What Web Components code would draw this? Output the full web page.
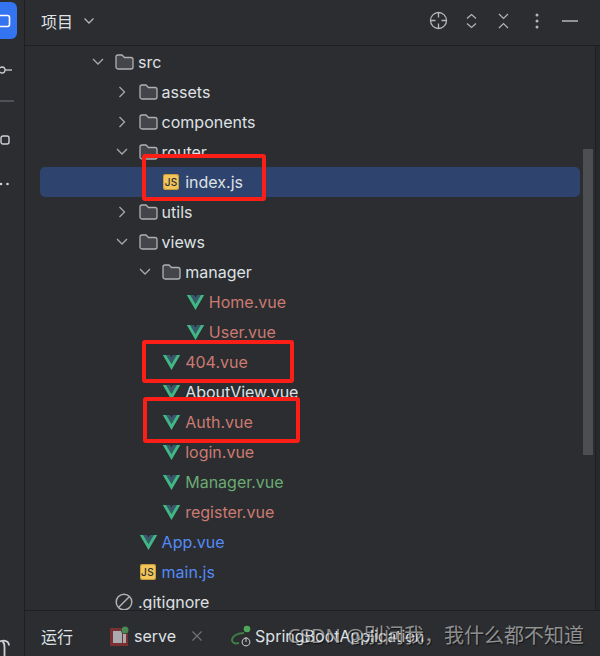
<!DOCTYPE html>
<html lang="zh">
<head>
<meta charset="utf-8">
<title>项目</title>
<style>
  html, body { margin: 0; padding: 0; background: #2b2d30; }
  body { width: 600px; height: 656px; overflow: hidden; font-family: Inter, "Noto Sans CJK SC", sans-serif; }
</style>
</head>
<body>
<ide-window>
  <side-rail slot="rail"></side-rail>
  <tool-header slot="header"></tool-header>
  <file-tree slot="tree">
    <tree-row depth="0" kind="folder" open>src</tree-row>
    <tree-row depth="1" kind="folder">assets</tree-row>
    <tree-row depth="1" kind="folder">components</tree-row>
    <tree-row depth="1" kind="folder" open>router</tree-row>
    <tree-row depth="2" kind="js" selected>index.js</tree-row>
    <tree-row depth="1" kind="folder">utils</tree-row>
    <tree-row depth="1" kind="folder" open>views</tree-row>
    <tree-row depth="2" kind="folder" open>manager</tree-row>
    <tree-row depth="3" kind="vue" tone="red">Home.vue</tree-row>
    <tree-row depth="3" kind="vue" tone="red">User.vue</tree-row>
    <tree-row depth="2" kind="vue" tone="red">404.vue</tree-row>
    <tree-row depth="2" kind="vue">AboutView.vue</tree-row>
    <tree-row depth="2" kind="vue" tone="red">Auth.vue</tree-row>
    <tree-row depth="2" kind="vue" tone="red">login.vue</tree-row>
    <tree-row depth="2" kind="vue" tone="green">Manager.vue</tree-row>
    <tree-row depth="2" kind="vue" tone="red">register.vue</tree-row>
    <tree-row depth="1" kind="vue" tone="blue">App.vue</tree-row>
    <tree-row depth="1" kind="js" tone="blue">main.js</tree-row>
    <tree-row depth="0" kind="ignore">.gitignore</tree-row>
  </file-tree>
  <run-bar slot="footer"></run-bar>
  <mark-box slot="overlay" style="left:142px;top:154px;width:124px;height:47px"></mark-box>
  <mark-box slot="overlay" style="left:142px;top:340px;width:152px;height:43px"></mark-box>
  <mark-box slot="overlay" style="left:143px;top:397px;width:157px;height:46px"></mark-box>
  <water-mark slot="overlay">CSDN @别问我，我什么都不知道</water-mark>
</ide-window>

<script>
const windowTemplate = document.createElement('template');
windowTemplate.innerHTML = `
<style>
  :host { display: grid; grid-template-columns: 25px 1fr; width: 600px; height: 656px; position: relative; overflow: hidden; background: #2b2d30; color: #dfe1e5; }
  main { display: flex; flex-direction: column; min-width: 0; height: 656px; }
</style>
<slot name="rail"></slot>
<main>
  <slot name="header"></slot>
  <slot name="tree"></slot>
  <slot name="footer"></slot>
</main>
<slot name="overlay"></slot>
`;

class IdeWindow extends HTMLElement {
  constructor() {
    super();
    this.attachShadow({ mode: 'open' });
    this.shadowRoot.appendChild(windowTemplate.content.cloneNode(true));
  }
}

const railTemplate = document.createElement('template');
railTemplate.innerHTML = `
<style>
  :host { display: flex; flex-direction: column; align-items: flex-start; border-right: 1px solid #1e1f22; height: 656px; overflow: hidden; position: relative; }
  .active { width: 17px; height: 37px; margin-top: 2px; background: #3574f0; border-radius: 0 6px 6px 0; display: flex; align-items: center; }
  .sep { width: 14px; height: 2px; background: #4e5157; margin-top: 25px; }
  svg { display: block; flex: none; }
  .commit { margin-top: 26px; }
  .square { margin-top: 33px; }
  .dots { margin-top: 37px; }
  .bottom { position: absolute; left: 0; top: 638px; }
</style>
<div class="active">
  <svg width="11" height="14" viewBox="0 0 11 14" fill="none"><path d="M0 1.500h7.500a2 2 0 0 1 2 2v7a2 2 0 0 1-2 2H0" stroke="#fff" stroke-width="1.600"/></svg>
</div>
<svg class="commit" width="13" height="10" viewBox="0 0 13 10" fill="none" stroke="#ced0d6" stroke-width="1.300"><circle cx="2" cy="5" r="3"/><path d="M5 5h7"/></svg>
<div class="sep"></div>
<svg class="square" width="10" height="10" viewBox="0 0 10 10" fill="none" stroke="#ced0d6" stroke-width="1.400"><rect x="1" y="1" width="8" height="8" rx="2"/></svg>
<svg class="dots" width="10" height="4" viewBox="0 0 10 4" fill="#ced0d6"><circle cx="1" cy="2" r="1.300"/><circle cx="7.500" cy="2" r="1.300"/></svg>
<svg class="bottom" width="11" height="18" viewBox="0 0 11 18" fill="none" stroke="#ced0d6" stroke-width="1.800"><path d="M0 3.500c5-2 9 0 9 4"/><path d="M2.500 3.500c1.500 1 2 3 2 5.500v9"/></svg>
`;

class SideRail extends HTMLElement {
  constructor() {
    super();
    this.attachShadow({ mode: 'open' });
    this.shadowRoot.appendChild(railTemplate.content.cloneNode(true));
  }
}

const headerTemplate = document.createElement('template');
headerTemplate.innerHTML = `
<style>
  :host { display: flex; align-items: center; height: 46px; box-sizing: border-box; flex: none; border-bottom: 1px solid #1e1f22; padding: 0 0 4px 16px; }
  .title { font: 16px "Noto Sans CJK SC", Inter, sans-serif; color: #dfe1e5; }
  .caret { margin-left: 10px; }
  .tools { margin-left: auto; display: flex; align-items: center; margin-right: 22px; }
  svg { display: block; }
  .tools svg { stroke: #b4b6ba; fill: none; }
</style>
<span class="title">项目</span>
<svg class="caret" width="12" height="8" viewBox="0 0 12 8" fill="none" stroke="#b4b6ba" stroke-width="1.300"><path d="M1.500 1.500 6 6l4.500-4.500"/></svg>
<div class="tools">
  <svg width="19" height="19" viewBox="0 0 19 19" stroke-width="1.300"><circle cx="9.500" cy="9.500" r="8"/><path d="M9.500 1.500v5M9.500 12.500v5M1.500 9.500h5M12.500 9.500h5"/></svg>
  <svg style="margin-left:18px" width="11" height="16" viewBox="0 0 11 16" stroke-width="1.200"><path d="M1 5.500 5.500 1.500l4.500 4M1 10.500l4.500 4 4.500-4"/></svg>
  <svg style="margin-left:21px" width="11" height="16" viewBox="0 0 11 16" stroke-width="1.200"><path d="M1 1l4.500 4.500L10 1M1 15l4.500-4.500L10 15"/></svg>
  <svg style="margin-left:26px;fill:#b4b6ba;stroke:none" width="4" height="16" viewBox="0 0 4 16"><circle cx="2" cy="2" r="1.500"/><circle cx="2" cy="8" r="1.500"/><circle cx="2" cy="14" r="1.500"/></svg>
  <svg style="margin-left:23px" width="16" height="2" viewBox="0 0 16 2" stroke-width="1.500"><path d="M0 1h16"/></svg>
</div>
`;

class ToolHeader extends HTMLElement {
  constructor() {
    super();
    this.attachShadow({ mode: 'open' });
    this.shadowRoot.appendChild(headerTemplate.content.cloneNode(true));
  }
}

const treeTemplate = document.createElement('template');
treeTemplate.innerHTML = `
<style>
  :host { display: block; flex: 1; min-height: 0; overflow: hidden; position: relative; padding-top: 1px; }
  .scrollbar { position: absolute; left: 558px; top: 103px; width: 10px; height: 306px; background: #4d4e51; }
  .edge { position: absolute; left: 570px; top: 0; bottom: 0; width: 5px; background: #27292c; border-left: 1px solid #1e1f22; }
</style>
<slot></slot>
<div class="scrollbar"></div>
<div class="edge"></div>
`;

class FileTree extends HTMLElement {
  constructor() {
    super();
    this.attachShadow({ mode: 'open' });
    this.shadowRoot.appendChild(treeTemplate.content.cloneNode(true));
  }
}

const icons = {
  folder: `<svg width="19" height="16" viewBox="0 0 19 16"><path d="M1 3a2 2 0 0 1 2-2h4l2.500 2.500H16a2 2 0 0 1 2 2V13a2 2 0 0 1-2 2H3a2 2 0 0 1-2-2z" fill="#43454a" stroke="#afb1b3" stroke-width="1.300"/></svg>`,
  vue: `<svg width="19" height="15" viewBox="0 0 256 221"><path d="M0 0l128 221L256 0h-66L128 107 66 0H0z" fill="#41b883"/><path d="M48 0l80 138L208 0h-58L128 38 106 0H48z" fill="#38596b"/></svg>`,
  js: `<span class="js">JS</span>`,
  ignore: `<svg width="18" height="18" viewBox="0 0 18 18" fill="none" stroke="#afb1b3" stroke-width="1.500"><circle cx="9" cy="9" r="7.800"/><path d="M3.500 14.500l11-11"/></svg>`
};
const tones = { red: '#cc7a72', green: '#6aab73', blue: '#548af7' };

const rowTemplate = document.createElement('template');
rowTemplate.innerHTML = `
<style>
  :host { display: flex; align-items: center; height: 30px; position: relative; font: 16px Inter, "Noto Sans CJK SC", sans-serif; color: #dfe1e5; white-space: nowrap; }
  .sel { display: none; position: absolute; left: 15px; width: 540px; top: 0; bottom: 0; background: #2e436e; border-radius: 5px; }
  :host([selected]) .sel { display: block; }
  .line { position: relative; display: flex; align-items: center; }
  .chev { width: 20px; margin-right: 7px; display: flex; justify-content: center; }
  .icon { width: 23px; display: flex; align-items: center; }
  .js { width: 16px; height: 16px; margin-left: 1px; border-radius: 3px; background: #f2c55c; box-shadow: inset 0 0 0 1px #c99d3a; color: #2b2d30; font: 500 10px/17px Inter, sans-serif; letter-spacing: .4px; text-align: center; }
  svg { display: block; }
</style>
<div class="sel"></div>
<div class="line">
  <span class="chev"></span>
  <span class="icon"></span>
  <span class="label"><slot></slot></span>
</div>
`;

class TreeRow extends HTMLElement {
  constructor() {
    super();
    this.attachShadow({ mode: 'open' });
    this.shadowRoot.appendChild(rowTemplate.content.cloneNode(true));
  }
  connectedCallback() {
    const root = this.shadowRoot;
    const kind = this.getAttribute('kind');
    root.querySelector('.line').style.paddingLeft = (63 + 23.6 * Number(this.getAttribute('depth'))) + 'px';
    root.querySelector('.icon').innerHTML = icons[kind];
    if (kind === 'folder') {
      root.querySelector('.chev').innerHTML = this.hasAttribute('open')
        ? '<svg width="12" height="8" viewBox="0 0 12 8" fill="none" stroke="#a8aaae" stroke-width="1.300"><path d="M1 1l5 5 5-5"/></svg>'
        : '<svg width="8" height="12" viewBox="0 0 8 12" fill="none" stroke="#a8aaae" stroke-width="1.300"><path d="M1.500 1l5 5-5 5"/></svg>';
    }
    const tone = tones[this.getAttribute('tone')];
    if (tone) root.querySelector('.label').style.color = tone;
  }
}

const runTemplate = document.createElement('template');
runTemplate.innerHTML = `
<style>
  :host { display: flex; align-items: center; flex: none; height: 46px; box-sizing: border-box; border-top: 1px solid #1e1f22; padding: 5px 0 0 16px; font: 16px Inter, "Noto Sans CJK SC", sans-serif; color: #dfe1e5; white-space: nowrap; }
  .name { font-family: "Noto Sans CJK SC", sans-serif; }
  .tab { display: flex; align-items: center; }
  svg { display: block; }
</style>
<span class="name">运行</span>
<div class="tab" style="margin-left:37px">
  <svg width="20" height="22" viewBox="0 0 20 22"><rect x="0" y="3" width="18" height="18" fill="#7a2f33"/><rect x="3" y="6" width="9" height="12" fill="#a9abae"/><rect x="13" y="6" width="3" height="12" fill="#a9abae"/><circle cx="15" cy="5" r="4" fill="#2b2d30"/><circle cx="15" cy="5" r="3.500" fill="#4a8a52"/></svg>
  <span style="margin-left:4px">serve</span>
  <svg style="margin-left:16px" width="10" height="10" viewBox="0 0 10 10" fill="none" stroke="#6f7277" stroke-width="1.200"><path d="M.5.500l9 9M9.500.500l-9 9"/></svg>
</div>
<div class="tab" style="margin-left:29px">
  <svg width="20" height="22" viewBox="0 0 20 22" fill="none"><path d="M13 8C7 8 1 11 1 15c0 3 3 4 7 3" stroke="#3f7d46" stroke-width="2"/><circle cx="16" cy="4" r="3.300" fill="#4fa85a"/><circle cx="15" cy="17" r="3.800" stroke="#b4b6ba" stroke-width="1.200"/><path d="M15 12v5" stroke="#b4b6ba" stroke-width="1.200"/></svg>
  <span style="margin-left:4px">SpringBootApplication</span>
</div>
`;

class RunBar extends HTMLElement {
  constructor() {
    super();
    this.attachShadow({ mode: 'open' });
    this.shadowRoot.appendChild(runTemplate.content.cloneNode(true));
  }
}

const boxTemplate = document.createElement('template');
boxTemplate.innerHTML = `
<style>
  :host { display: block; position: absolute; box-sizing: border-box; border: 4px solid #fb1f17; border-radius: 3px; }
</style>
`;

class MarkBox extends HTMLElement {
  constructor() {
    super();
    this.attachShadow({ mode: 'open' });
    this.shadowRoot.appendChild(boxTemplate.content.cloneNode(true));
  }
}

const markTemplate = document.createElement('template');
markTemplate.innerHTML = `
<style>
  :host { display: block; position: absolute; right: 16px; top: 623px; font: 20px/26px "Noto Sans", "Noto Sans CJK SC", sans-serif; color: rgba(255,255,255,.5); text-shadow: 1px 1px 1px rgba(0,0,0,.6); white-space: nowrap; }
</style>
<slot></slot>
`;

class WaterMark extends HTMLElement {
  constructor() {
    super();
    this.attachShadow({ mode: 'open' });
    this.shadowRoot.appendChild(markTemplate.content.cloneNode(true));
  }
}

customElements.define('ide-window', IdeWindow);
customElements.define('side-rail', SideRail);
customElements.define('tool-header', ToolHeader);
customElements.define('file-tree', FileTree);
customElements.define('tree-row', TreeRow);
customElements.define('run-bar', RunBar);
customElements.define('mark-box', MarkBox);
customElements.define('water-mark', WaterMark);
</script>
</body>
</html>
